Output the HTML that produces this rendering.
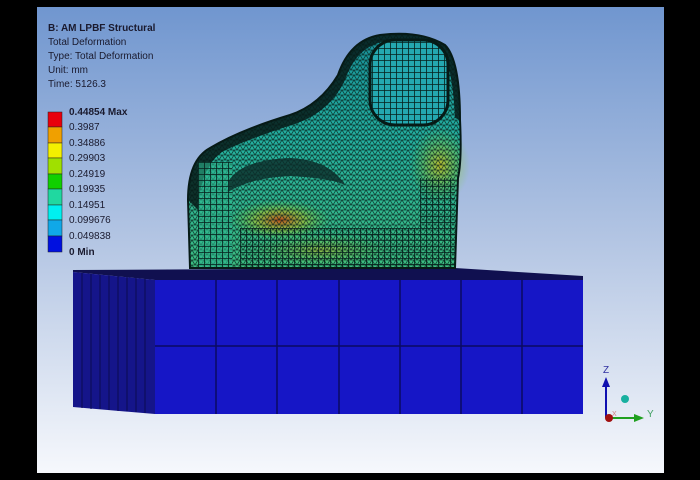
<!DOCTYPE html>
<html><head><meta charset="utf-8"><style>
html,body{margin:0;padding:0;background:#000;width:700px;height:480px;overflow:hidden}
svg{display:block}
text{font-family:"Liberation Sans",sans-serif}
</style></head><body>
<svg width="700" height="480" viewBox="0 0 700 480">
<defs>
<linearGradient id="bg" x1="0" y1="0" x2="0" y2="1">
<stop offset="0" stop-color="#7096cf"/><stop offset="0.5" stop-color="#b3c5e3"/><stop offset="1" stop-color="#f6f8fc"/>
</linearGradient>
<linearGradient id="body" x1="0" y1="0" x2="0" y2="1">
<stop offset="0" stop-color="#178f98"/><stop offset="0.45" stop-color="#24b0a0"/><stop offset="1" stop-color="#3cbc80"/>
</linearGradient>
<radialGradient id="hot1" cx="0.5" cy="0.5" r="0.5"><stop offset="0" stop-color="#d04010" stop-opacity="0.9"/><stop offset="0.5" stop-color="#b8c020" stop-opacity="0.6"/><stop offset="1" stop-color="#60d040" stop-opacity="0"/></radialGradient>
<radialGradient id="hot2" cx="0.5" cy="0.5" r="0.5"><stop offset="0" stop-color="#c8b820" stop-opacity="0.9"/><stop offset="1" stop-color="#70d040" stop-opacity="0"/></radialGradient>
<pattern id="grid" width="6" height="6" patternUnits="userSpaceOnUse"><path d="M0 0H6M0 0V6" stroke="#06201c" stroke-width="1.6" fill="none"/></pattern>
<pattern id="tri" width="6" height="5" patternUnits="userSpaceOnUse"><path d="M0 0H6M0 0L3 5L6 0M0 5H6" stroke="#06201c" stroke-width="0.8" fill="none" opacity="0.8"/></pattern>
</defs>
<rect x="37" y="7" width="627" height="466" fill="url(#bg)"/>
<!-- plate -->
<polygon points="73,270 455,268 583,276 583,280 155,280 73,272" fill="#101050"/>
<polygon points="73,272 155,280 155,414 73,407" fill="#15158a"/>
<g stroke="#0a0a50" stroke-width="1">
<line x1="82" y1="273" x2="82" y2="408"/><line x1="91" y1="274" x2="91" y2="409"/><line x1="100" y1="275" x2="100" y2="409"/><line x1="109" y1="276" x2="109" y2="410"/><line x1="118" y1="276" x2="118" y2="411"/><line x1="127" y1="277" x2="127" y2="411"/><line x1="136" y1="278" x2="136" y2="412"/><line x1="145" y1="279" x2="145" y2="413"/>
</g>
<rect x="155" y="280" width="428" height="134" fill="#1616c6"/>
<g stroke="#0a0a60" stroke-width="1.5">
<line x1="216" y1="280" x2="216" y2="414"/><line x1="277" y1="280" x2="277" y2="414"/><line x1="339" y1="280" x2="339" y2="414"/><line x1="400" y1="280" x2="400" y2="414"/><line x1="461" y1="280" x2="461" y2="414"/><line x1="522" y1="280" x2="522" y2="414"/>
<line x1="155" y1="346" x2="583" y2="346"/>
</g>
<!-- part -->
<path d="M190,268 L188,200 Q188,160 210,148 Q240,130 290,115 Q320,105 338,75 Q350,40 380,35 Q420,30 445,45 Q460,60 460,120 Q462,160 458,178 L455,268 Z" fill="url(#body)"/>
<ellipse cx="280" cy="220" rx="50" ry="20" fill="url(#hot1)"/>
<ellipse cx="440" cy="165" rx="30" ry="38" fill="url(#hot2)"/>
<ellipse cx="320" cy="250" rx="70" ry="16" fill="url(#hot2)" opacity="0.7"/>
<path d="M190,268 L188,200 Q188,160 210,148 Q240,130 290,115 Q320,105 338,75 Q350,40 380,35 Q420,30 445,45 Q460,60 460,120 Q462,160 458,178 L455,268 Z" fill="url(#tri)"/>
<!-- dark upper shell -->
<path d="M188,200 Q188,160 210,148 Q240,130 290,115 Q320,105 338,75 Q350,40 380,35 Q420,30 445,45 Q460,60 460,120 L455,118 Q452,60 440,50 Q415,38 382,42 Q356,48 345,80 Q330,112 295,124 Q245,140 222,152 Q200,168 198,210 Z" fill="#071a18" opacity="0.85"/>
<rect x="198" y="162" width="34" height="106" fill="#2fb890" opacity="0.6"/>
<rect x="198" y="162" width="34" height="106" fill="url(#grid)"/>
<rect x="240" y="228" width="215" height="40" fill="url(#grid)"/>
<rect x="420" y="178" width="35" height="50" fill="url(#grid)"/>
<rect x="370" y="40" width="78" height="85" rx="25" fill="#24a8b0" stroke="#061a16" stroke-width="3"/>
<rect x="370" y="40" width="78" height="85" rx="25" fill="url(#grid)"/>
<path d="M228,182 Q240,160 290,158 Q330,160 345,185 Q330,178 290,176 Q250,178 228,192Z" fill="#0b2a28" opacity="0.8"/>
<path d="M190,268 L188,200 Q188,160 210,148 Q240,130 290,115 Q320,105 338,75 Q350,40 380,35 Q420,30 445,45 Q460,60 460,120 Q462,160 458,178 L455,268 Z" fill="none" stroke="#061a16" stroke-width="2"/>
<!-- legend -->
<text x="48" y="31" font-size="10" font-weight="bold" fill="#1a1a2e">B: AM LPBF Structural</text>
<text x="48" y="45" font-size="10" fill="#1a1a2e">Total Deformation</text>
<text x="48" y="59" font-size="10" fill="#1a1a2e">Type: Total Deformation</text>
<text x="48" y="73" font-size="10" fill="#1a1a2e">Unit: mm</text>
<text x="48" y="87" font-size="10" fill="#1a1a2e">Time: 5126.3</text>
<g stroke="#222" stroke-width="0.5">
<rect x="48" y="112" width="14" height="15" fill="#e8000c"/>
<rect x="48" y="127" width="14" height="16" fill="#f0a000"/>
<rect x="48" y="143" width="14" height="15" fill="#f4f000"/>
<rect x="48" y="158" width="14" height="16" fill="#a0e000"/>
<rect x="48" y="174" width="14" height="15" fill="#10d000"/>
<rect x="48" y="189" width="14" height="16" fill="#20d8a0"/>
<rect x="48" y="205" width="14" height="15" fill="#00f0f0"/>
<rect x="48" y="220" width="14" height="16" fill="#10a8e8"/>
<rect x="48" y="236" width="14" height="16" fill="#0010e0"/>
</g>
<g font-size="10" fill="#1a1a2e">
<text x="69" y="115" font-weight="bold">0.44854 Max</text>
<text x="69" y="130">0.3987</text>
<text x="69" y="146">0.34886</text>
<text x="69" y="161">0.29903</text>
<text x="69" y="177">0.24919</text>
<text x="69" y="192">0.19935</text>
<text x="69" y="208">0.14951</text>
<text x="69" y="223">0.099676</text>
<text x="69" y="239">0.049838</text>
<text x="69" y="255" font-weight="bold">0 Min</text>
</g>
<!-- triad -->
<line x1="606" y1="418" x2="606" y2="385" stroke="#1010b0" stroke-width="2"/>
<polygon points="602,387 610,387 606,377" fill="#1010b0"/>
<line x1="606" y1="418" x2="636" y2="418" stroke="#20a020" stroke-width="2"/>
<polygon points="634,414 634,422 644,418" fill="#20a020"/>
<circle cx="609" cy="418" r="4" fill="#a01010"/>
<circle cx="625" cy="399" r="4" fill="#18b0a0"/>
<text x="603" y="373" font-size="10" fill="#3030a0">Z</text>
<text x="647" y="417" font-size="10" fill="#40a060">Y</text>
<text x="612" y="416" font-size="7" fill="#d08080">X</text>
</svg>
</body></html>
